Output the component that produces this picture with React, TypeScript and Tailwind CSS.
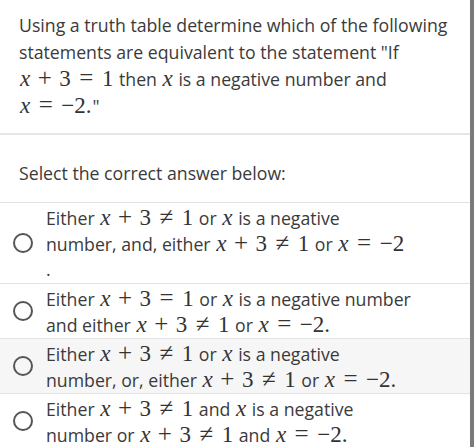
import type { ReactNode } from "react";

const V = ({ children }: { children: ReactNode }) => (
  <span className="italic">{children}</span>
);

const Op = ({ children }: { children: ReactNode }) => (
  <span className="mx-[7.5px] text-[25px]">{children}</span>
);

const Rel = ({ children }: { children: ReactNode }) => (
  <span className="mx-[8.5px] text-[25px]">{children}</span>
);

function M({ children }: { children: ReactNode }) {
  return (
    <span className="mx-[1px] font-['Liberation_Serif','DejaVu_Serif',serif] text-[23px] text-[#333]">
      {children}
    </span>
  );
}

const XPlus3 = ({ rel }: { rel: string }) => (
  <M>
    <V>x</V>
    <Op>+</Op>3<Rel>{rel}</Rel>1
  </M>
);

const XEq = ({ dot }: { dot?: boolean }) => (
  <M>
    <V>x</V>
    <Rel>=</Rel>−2{dot ? "." : ""}
  </M>
);

const X = () => (
  <M>
    <V>x</V>
  </M>
);

function Radio() {
  return (
    <div className="flex w-[46px] shrink-0 justify-center pr-[1px]">
      <span className="block h-[20px] w-[20px] rounded-full border-2 border-[#555]" />
    </div>
  );
}

function Option({ lines, shaded }: { lines: ReactNode[]; shaded?: boolean }) {
  return (
    <div
      className={`flex items-center border-b border-[#e3e3e3] pt-[1px] pb-[1px] ${
        shaded ? "bg-[#f6f6f6]" : "bg-white"
      }`}
    >
      <Radio />
      <div>
        {lines.map((l, i) => (
          <div key={i} className="h-[26px] whitespace-nowrap leading-[26px]">
            {l}
          </div>
        ))}
      </div>
    </div>
  );
}

export default function App() {
  return (
    <div className="flex min-h-screen bg-white font-['Open_Sans',sans-serif] text-[17.7px] text-[#3a3a3a]">
      <main className="w-[470px]">
        <section className="border-b-2 border-[#e6e6e6] px-[19px] pt-[12px] pb-[15px]">
          <div className="h-[26.5px] whitespace-nowrap leading-[26.5px]">
            Using a truth table determine which of the following
          </div>
          <div className="h-[26.5px] whitespace-nowrap leading-[26.5px]">
            statements are equivalent to the statement "If
          </div>
          <div className="h-[26.5px] whitespace-nowrap leading-[26.5px]">
            <XPlus3 rel="=" /> then <X /> is a negative number and
          </div>
          <div className="h-[26.5px] whitespace-nowrap leading-[26.5px]">
            <XEq dot />"
          </div>
        </section>

        <section className="border-b border-[#e3e3e3] px-[19px] pt-[25px] pb-[16px]">
          <div className="h-[26px] leading-[26px]">Select the correct answer below:</div>
        </section>

        <Option
          lines={[
            <>
              Either <XPlus3 rel="≠" /> or <X /> is a negative
            </>,
            <>
              number, and, either <XPlus3 rel="≠" /> or <XEq />
            </>,
            <>.</>,
          ]}
        />
        <Option
          lines={[
            <>
              Either <XPlus3 rel="=" /> or <X /> is a negative number
            </>,
            <>
              and either <XPlus3 rel="≠" /> or <XEq dot />
            </>,
          ]}
        />
        <Option
          shaded
          lines={[
            <>
              Either <XPlus3 rel="≠" /> or <X /> is a negative
            </>,
            <>
              number, or, either <XPlus3 rel="≠" /> or <XEq dot />
            </>,
          ]}
        />
        <Option
          lines={[
            <>
              Either <XPlus3 rel="≠" /> and <X /> is a negative
            </>,
            <>
              number or <XPlus3 rel="≠" /> and <XEq dot />
            </>,
          ]}
        />
      </main>
      <aside className="w-[4px] bg-[#7b7b7b]" />
    </div>
  );
}
